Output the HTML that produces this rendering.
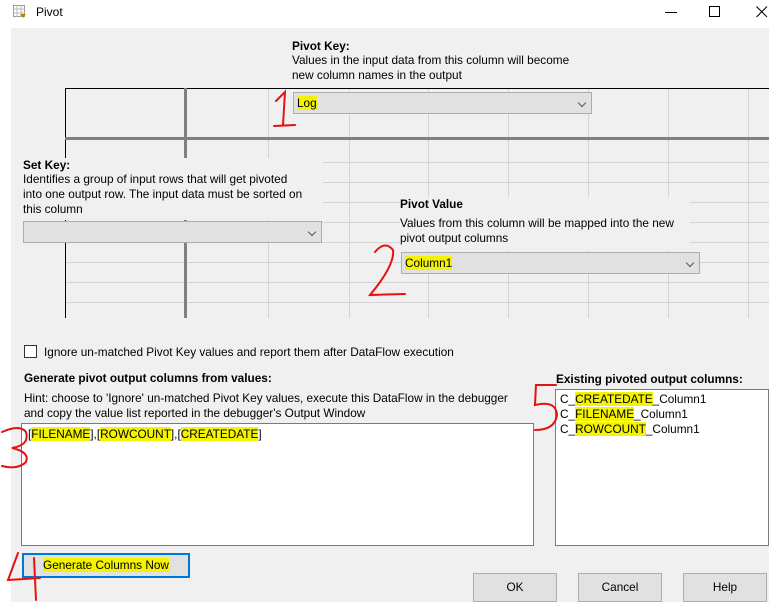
<!DOCTYPE html>
<html><head><meta charset="utf-8"><style>
*{margin:0;padding:0;box-sizing:border-box}
body{width:769px;height:602px;background:#fff;font-family:"Liberation Sans",sans-serif;font-size:11.8px;color:#000;position:relative;overflow:hidden}
.a{position:absolute}
.panel{left:11px;top:28px;width:758px;height:574px;background:#f0f0f0}
.vl{position:absolute;width:1px;background:#d4d4d4;top:88px;height:230px}
.hl{position:absolute;height:1px;background:#d4d4d4;left:65px;width:704px}
.lbl{position:absolute;background:#f0f0f0;line-height:14px}
.b{font-weight:bold}
.combo{position:absolute;background:#e1e1e1;border:1px solid #adadad;height:22px;padding-left:3px;line-height:20px}
.combo .arr{position:absolute;right:6px;top:7px;width:6px;height:6px;border-right:1px solid #555;border-bottom:1px solid #555;transform:rotate(45deg)}
.hi{background:#f4f400}
.box{position:absolute;background:#fff;border:1px solid #7a7a7a}
.btn{position:absolute;background:#e1e1e1;border:1px solid #adadad;text-align:center;line-height:26px}
</style></head><body>
<svg class="a" style="left:13px;top:5px" width="14" height="14"><rect x="0.5" y="0.5" width="11" height="11" fill="#fff" stroke="#999"/><path d="M0 4H12M0 8H12M4 0V12M8 0V12" stroke="#bbb"/><path d="M7 9h6l-3 4z" fill="#c08000"/></svg>
<div class="a" style="left:36px;top:5px;font-size:12px">Pivot</div>
<div class="a" style="left:665px;top:12px;width:12px;height:1px;background:#000"></div>
<div class="a" style="left:709px;top:6px;width:11px;height:11px;border:1px solid #000"></div>
<svg class="a" style="left:756px;top:6px" width="12" height="12"><path d="M0.5 0.5L11 11M11 0.5L0.5 11" stroke="#000"/></svg>
<div class="a panel"></div>
<div class="vl" style="left:268px"></div><div class="vl" style="left:349px"></div><div class="vl" style="left:428px"></div><div class="vl" style="left:508px"></div><div class="vl" style="left:588px"></div><div class="vl" style="left:668px"></div><div class="vl" style="left:748px"></div>
<div class="hl" style="top:162px"></div><div class="hl" style="top:182px"></div><div class="hl" style="top:202px"></div><div class="hl" style="top:222px"></div><div class="hl" style="top:242px"></div><div class="hl" style="top:262px"></div><div class="hl" style="top:282px"></div><div class="hl" style="top:302px"></div>
<div class="a" style="left:65px;top:88px;width:704px;height:1px;background:#000"></div>
<div class="a" style="left:65px;top:88px;width:1px;height:230px;background:#000"></div>
<div class="a" style="left:184px;top:88px;width:3px;height:230px;background:#808080"></div>
<div class="a" style="left:65px;top:137px;width:704px;height:3px;background:#808080"></div>
<div class="lbl" style="left:292px;top:39px;width:296px;height:45px"><span class="b">Pivot Key:</span><br><span style="line-height:15px">Values in the input data from this column will become<br>new column names in the output</span></div>
<div class="combo" style="left:293px;top:92px;width:299px"><span class="hi">Log</span><span class="arr"></span></div>
<div class="lbl" style="left:23px;top:158px;width:300px;height:62px"><span class="b">Set Key:</span><br><span style="line-height:15px">Identifies a group of input rows that will get pivoted<br>into one output row. The input data must be sorted on<br>this column</span></div>
<div class="combo" style="left:23px;top:221px;width:299px"><span class="arr"></span></div>
<div class="lbl" style="left:400px;top:197px;width:290px;height:54px"><span class="b">Pivot Value</span><br><span style="line-height:15px;position:relative;top:5px">Values from this column will be mapped into the new<br>pivot output columns</span></div>
<div class="combo" style="left:401px;top:252px;width:299px"><span class="hi">Column1</span><span class="arr"></span></div>
<div class="a" style="left:24px;top:345px;width:13px;height:13px;border:1px solid #333;background:#fff"></div>
<div class="a" style="left:44px;top:345px">Ignore un-matched Pivot Key values and report them after DataFlow execution</div>
<div class="a b" style="left:24px;top:371px">Generate pivot output columns from values:</div>
<div class="a" style="left:24px;top:391px;line-height:15px">Hint: choose to 'Ignore' un-matched Pivot Key values, execute this DataFlow in the debugger<br>and copy the value list reported in the debugger's Output Window</div>
<div class="box" style="left:21px;top:423px;width:513px;height:123px;padding:3px 0 0 6px">[<span class="hi">FILENAME</span>],[<span class="hi">ROWCOUNT</span>],[<span class="hi">CREATEDATE</span>]</div>
<div class="a b" style="left:556px;top:372px">Existing pivoted output columns:</div>
<div class="box" style="left:555px;top:389px;width:214px;height:157px;padding:2px 0 0 4px;line-height:15px">C_<span class="hi">CREATEDATE</span>_Column1<br>C_<span class="hi">FILENAME</span>_Column1<br>C_<span class="hi">ROWCOUNT</span>_Column1</div>
<div class="btn" style="left:22px;top:553px;width:168px;height:25px;border:2px solid #0078d7;line-height:21px"><span class="hi">Generate Columns Now</span></div>
<div class="btn" style="left:473px;top:573px;width:84px;height:29px">OK</div>
<div class="btn" style="left:578px;top:573px;width:84px;height:29px">Cancel</div>
<div class="btn" style="left:683px;top:573px;width:84px;height:29px">Help</div>
<svg class="a" style="left:0;top:0" width="769" height="602" fill="none" stroke="#e81010" stroke-width="2" stroke-linecap="round">
<path d="M276 101 L285 92 L283 125 M274 126 L295 125"/>
<path d="M375 252 Q385 240 393 250 Q395 265 370 295 L405 294"/>
<path d="M2 432 Q20 424 26 432 Q30 445 12 448 Q30 452 26 462 Q18 470 2 466"/>
<path d="M18 553 L8 580 L40 578 M34 558 L36 600"/>
<path d="M556 385 L536 385 L535 405 Q556 400 557 415 Q555 430 535 430"/>
</svg>
</body></html>
